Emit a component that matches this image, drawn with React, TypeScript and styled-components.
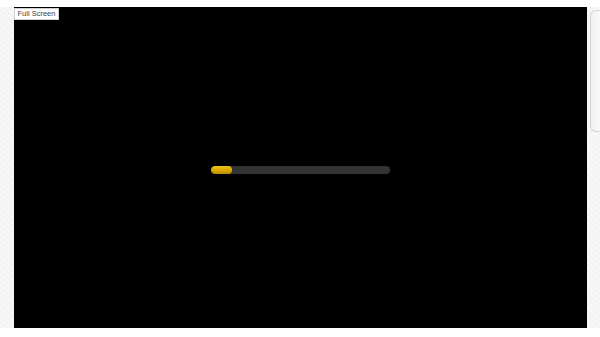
import React from "react";
import styled, {createGlobalStyle} from "styled-components";

const Global = createGlobalStyle`
	html, body { margin: 0; padding: 0; background: #fff; }
	body { font-family: "Liberation Sans", Arial, sans-serif; }
`

const Page = styled.div`
	display: grid;
	grid-template-columns: 14px 1fr 13px;
	grid-template-rows: 7px 1fr 9px;
	width: 600px;
	height: 337px;
	overflow: hidden;
`
const TopStrip = styled.div`
	grid-column: 1 / 4;
	background: #fff;
`
const Side = styled.div<{ $right?: boolean }>`
	background: repeating-linear-gradient(45deg, #f3f3f3 0 2px, #f8f8f8 2px 4px);
	display: flex;
	justify-content: flex-end;
	padding-top: ${(p) => (p.$right ? "3px" : "0")};
`
const Thumb = styled.div`
	width: 10px;
	height: 122px;
	box-sizing: border-box;
	border: 1px solid #d4d4d4;
	border-right: none;
	border-radius: 6px 0 0 6px;
	background: linear-gradient(90deg, #f0f0f0, #fafafa);
`
const Stage = styled.div`
	position: relative;
	background: #000;
	display: flex;
	align-items: center;
	justify-content: center;
`
const FullButton = styled.button`
	position: absolute;
	left: 0;
	top: 1px;
	height: 12px;
	width: 45px;
	padding: 0;
	border: 1px solid #cfcfcf;
	background: #fff;
	color: #444;
	font-family: "Liberation Sans", Arial, sans-serif;
	font-size: 7.5px;
	line-height: 10px;
	cursor: pointer;
`
const Track = styled.div`
	width: 179px;
	height: 8px;
	margin-top: 4px;
	border-radius: 4px;
	background: #333;
	overflow: hidden;
`
const Fill = styled.div`
	height: 100%;
	border-radius: 4px;
	background: linear-gradient(180deg, #f0c419 0%, #d9a800 55%, #b88b00 100%);
`
const BottomStrip = styled.div`
	grid-column: 1 / 4;
	background: #fff;
`

const App = () => {
	const progress = 12;
	return (
		<>
			<Global/>
			<Page>
				<TopStrip/>
				<Side/>
				<Stage>
					<FullButton>Full Screen</FullButton>
					<Track>
						<Fill style={{width: `${progress}%`}}/>
					</Track>
				</Stage>
				<Side $right>
					<Thumb/>
				</Side>
				<BottomStrip/>
			</Page>
		</>
	);
};

export default App;
